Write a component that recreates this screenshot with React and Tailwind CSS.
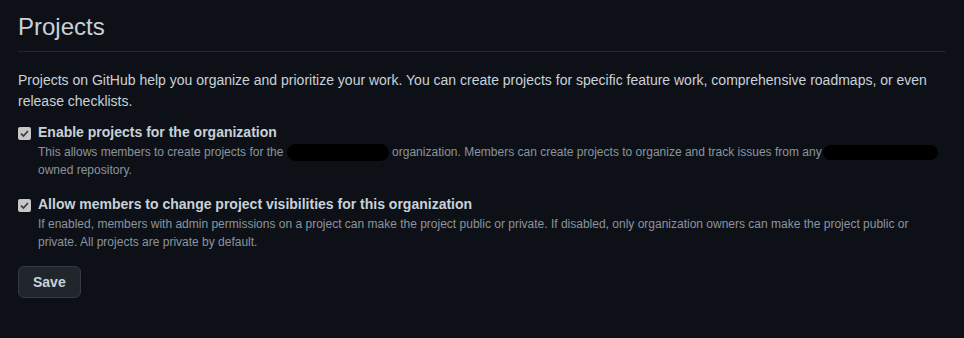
import { useState } from 'react';

const Redacted = ({ className }) => (
  <span className={`inline-block align-middle bg-black rounded-full ${className}`} />
);

const CheckRow = ({ checked, onChange, label, children }) => (
  <div className="flex gap-[7px]">
    <div className="pt-[6px]">
      <button
        type="button"
        onClick={onChange}
        className="w-[13px] h-[13px] rounded-[2px] bg-[#c6c6c6] flex items-center justify-center"
      >
        {checked && (
          <svg viewBox="0 0 12 12" className="w-[11px] h-[11px]">
            <path d="M2.2 6.2 L4.8 8.8 L9.8 3.3" fill="none" stroke="#3b3b3b" strokeWidth="1.9" />
          </svg>
        )}
      </button>
    </div>
    <div>
      <div className="text-[14px] leading-[22px] font-semibold text-[#c9d1d9]">{label}</div>
      <p className="text-[12px] leading-[18px] text-[#8b949e]">{children}</p>
    </div>
  </div>
);

const App = () => {
  const [enabled, setEnabled] = useState(true);
  const [visibility, setVisibility] = useState(true);

  return (
    <div
      className="min-h-[338px] bg-[#0d1117] px-[18px]"
      style={{ fontFamily: '"Segoe UI", "Liberation Sans", sans-serif' }}
    >
      <div className="w-[928px]">
        <div className="pt-[12px] pb-[9px] border-b border-[#21262d]">
          <h2 className="text-[24px] leading-[30px] font-normal text-[#c9d1d9]">Projects</h2>
        </div>

        <p className="mt-[18px] text-[14px] leading-[21px] text-[#c9d1d9]">
          Projects on GitHub help you organize and prioritize your work. You can create projects for specific feature
          work, comprehensive roadmaps, or even release checklists.
        </p>

        <div className="mt-[9px] flex flex-col gap-[14px]">
          <CheckRow
            checked={enabled}
            onChange={() => setEnabled(!enabled)}
            label="Enable projects for the organization"
          >
            This allows members to create projects for the <Redacted className="w-[102px] h-[17px]" /> organization.
            Members can create projects to organize and track issues from any
            <Redacted className="w-[115px] h-[15px] ml-[1px]" /> owned repository.
          </CheckRow>

          <CheckRow
            checked={visibility}
            onChange={() => setVisibility(!visibility)}
            label="Allow members to change project visibilities for this organization"
          >
            If enabled, members with admin permissions on a project can make the project public or private. If disabled,
            only organization owners can make the project public or private. All projects are private by default.
          </CheckRow>
        </div>

        <button
          type="button"
          className="mt-[15px] h-[32px] px-[14px] rounded-[6px] bg-[#21262d] border border-[#363b42] text-[14px] font-semibold text-[#c9d1d9]"
        >
          Save
        </button>
      </div>
    </div>
  );
};

export default App;
